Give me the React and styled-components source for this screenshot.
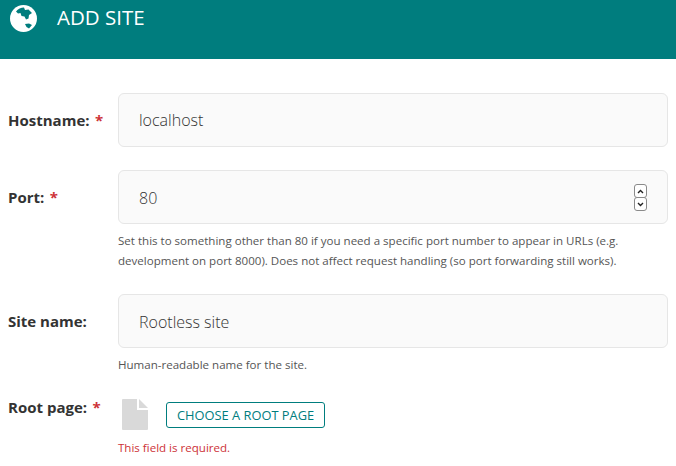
import React from 'react';
import styled, { createGlobalStyle } from 'styled-components';

const GlobalStyle = createGlobalStyle`
  html, body {
    margin: 0;
    background: #fff;
    font-family: "Open Sans", "Liberation Sans", sans-serif;
    color: #333;
  }
`;

const Page = styled.div`
  width: 676px;
  height: 466px;
  overflow: hidden;
`;

const Header = styled.header`
  height: 59px;
  box-sizing: border-box;
  background: #007d7e;
  display: flex;
  align-items: flex-start;
  gap: 20px;
  padding: 5px 0 0 10px;
  color: #fff;
`;

const Title = styled.h1`
  margin: 0;
  font-size: 20.5px;
  line-height: 24px;
  font-weight: 500;
  text-transform: uppercase;
`;

const Form = styled.form`
  padding: 34px 8px 0;
  display: flex;
  flex-direction: column;
`;

const Row = styled.div`
  display: grid;
  grid-template-columns: 110px 1fr;
  margin-bottom: 23px;
`;

const Label = styled.label`
  font-size: 15px;
  font-weight: 700;
  line-height: 20px;
  margin-top: ${(p) => p.$top ?? 17}px;
  color: #333;
`;

const Star = styled.span`
  color: #cd3238;
  margin-left: 1.5px;
`;

const InputBox = styled.div`
  position: relative;
  height: 54px;
  box-sizing: border-box;
  border: 1px solid #e6e6e6;
  border-radius: 6px;
  background: #fafafa;
`;

const Input = styled.input`
  width: 100%;
  height: 100%;
  box-sizing: border-box;
  border: 0;
  outline: 0;
  background: transparent;
  padding: ${(p) => p.$nudge || 0}px 20px 0;
  font: 300 16px "Open Sans", sans-serif;
  color: #333;
`;

const Spinner = styled.div`
  position: absolute;
  top: 13px;
  right: 20px;
  display: flex;
  flex-direction: column;
`;

const SpinButton = styled.span`
  width: 13px;
  height: 14px;
  box-sizing: border-box;
  border: 1px solid #8a8a8a;
  border-radius: 3px;
  margin-bottom: -1px;
  display: flex;
  align-items: center;
  justify-content: center;
  background: #fff;
`;

const Help = styled.p`
  margin: 7px 0 0;
  font-size: 11.55px;
  line-height: 20px;
  color: #555;
`;

const Chooser = styled.div`
  display: flex;
  align-items: center;
  gap: 18px;
  height: 32px;
  padding-left: 4px;
`;

const ChooseButton = styled.button`
  height: 26px;
  margin-top: 2px;
  padding: 0 10px;
  box-sizing: border-box;
  border: 1px solid #007d7e;
  border-radius: 3px;
  background: #fff;
  color: #007d7e;
  font: 400 12.85px "Open Sans", sans-serif;
  text-transform: uppercase;
`;

const Error = styled.p`
  margin: 10px 0 0;
  font-size: 11.55px;
  line-height: 16px;
  color: #cd3238;
`;

const Chevron = ({ up }) => (
  <svg width="7" height="5" viewBox="0 0 7 5">
    <path d={up ? 'M1 4l2.5-2.5L6 4' : 'M1 1l2.5 2.5L6 1'} fill="none" stroke="#222" strokeWidth="1.4" />
  </svg>
);

const DocIcon = () => (
  <svg width="26" height="32" viewBox="0 0 26 32">
    <path d="M1 1h14v11h11v19a1 1 0 0 1-1 1H1a1 1 0 0 1-1-1V2a1 1 0 0 1 1-1z" fill="#d9d9d9" />
    <path d="M17 1l9 9h-9z" fill="#d9d9d9" />
  </svg>
);

const GlobeIcon = () => (
  <svg width="27" height="27" viewBox="0 0 27 27">
    <circle cx="13.5" cy="13.5" r="13.5" fill="#fff" />
    <path
      d="M6 6.5C8 4 11 2.5 14 2.5l1 2.5 3.5-.5L22 8l-3 2-.5 3.5-2.5 1-1.5-3-3-.5-1-3-2.5.5z"
      fill="#007d7e"
    />
    <path d="M15 19l4-.5 3 1.5-3 3.5-2.5-1.5z" fill="#007d7e" />
  </svg>
);

export default function App() {
  return (
    <Page>
      <GlobalStyle />
      <Header>
        <GlobeIcon />
        <Title>Add site</Title>
      </Header>
      <Form>
        <Row>
          <Label>Hostname: <Star>*</Star></Label>
          <InputBox><Input readOnly value="localhost" /></InputBox>
        </Row>
        <Row>
          <Label>Port: <Star>*</Star></Label>
          <div>
            <InputBox>
              <Input readOnly value="80" $nudge={2} />
              <Spinner>
                <SpinButton><Chevron up /></SpinButton>
                <SpinButton><Chevron /></SpinButton>
              </Spinner>
            </InputBox>
            <Help>
              Set this to something other than 80 if you need a specific port number to appear in URLs (e.g.
              development on port 8000). Does not affect request handling (so port forwarding still works).
            </Help>
          </div>
        </Row>
        <Row>
          <Label>Site name:</Label>
          <div>
            <InputBox><Input readOnly value="Rootless site" $nudge={2} /></InputBox>
            <Help>Human-readable name for the site.</Help>
          </div>
        </Row>
        <Row>
          <Label $top={-1}>Root page: <Star>*</Star></Label>
          <div>
            <Chooser>
              <DocIcon />
              <ChooseButton type="button">Choose a root page</ChooseButton>
            </Chooser>
            <Error>This field is required.</Error>
          </div>
        </Row>
      </Form>
    </Page>
  );
}
